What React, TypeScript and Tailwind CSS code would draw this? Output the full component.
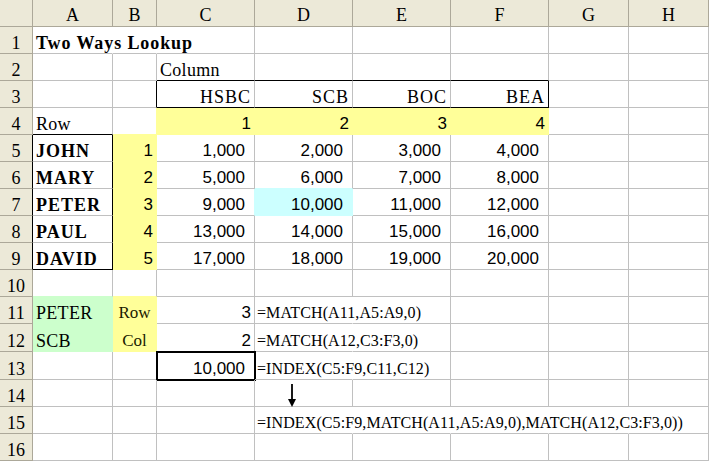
type Fill = 'w' | 'y' | 'g' | 'c'
type Edge = Fill | 'grid' | 'k'

type Cell = {
  v?: string
  f?: 'title' | 'label' | 'bank' | 'small' | 'name' | 'num' | 'fx'
  al?: 'l' | 'r' | 'c'
  pad?: 'fmt'
  fill?: Fill
  r?: 'k'
  b?: 'k'
  hideR?: boolean
  thick?: boolean
  arrow?: boolean
}

const COLS = ['A', 'B', 'C', 'D', 'E', 'F', 'G', 'H']

// white cells get no background so text spilling over from the left stays visible
const bgCls: Record<Fill, string> = {
  w: '',
  y: 'bg-[#ffff99]',
  g: 'bg-[#ccffcc]',
  c: 'bg-[#ccffff]',
}

const rCls: Record<Edge, string> = {
  grid: 'border-r-[#c0c0c0]',
  k: 'border-r-black',
  w: 'border-r-transparent',
  y: 'border-r-[#ffff99]',
  g: 'border-r-[#ccffcc]',
  c: 'border-r-[#ccffff]',
}

const bCls: Record<Edge, string> = {
  grid: 'border-b-[#c0c0c0]',
  k: 'border-b-black',
  w: 'border-b-transparent',
  y: 'border-b-[#ffff99]',
  g: 'border-b-[#ccffcc]',
  c: 'border-b-[#ccffff]',
}

const fontCls = {
  title: "font-['Liberation_Serif',serif] text-[18px] font-bold tracking-[0.9px] text-black",
  label: "font-['Liberation_Serif',serif] text-[18px] tracking-[0.3px] text-black",
  bank: "font-['Liberation_Serif',serif] text-[18px] tracking-[1px] text-black",
  small: "font-['Liberation_Serif',serif] text-[17px] text-[#1a1a00]",
  name: "font-['Liberation_Serif',serif] text-[18px] font-bold tracking-[1px] text-black",
  num: "font-['Liberation_Sans',sans-serif] text-[17px] text-black",
  fx: "font-['Liberation_Serif',serif] text-[16px] tracking-[0.1px] text-black",
}

const num = (v: string): Cell => ({ v, f: 'num', al: 'r', pad: 'fmt' })
const idx = (v: string): Cell => ({ v, f: 'num', al: 'r', fill: 'y' })
const name = (v: string, last = false): Cell => ({ v, f: 'name', r: 'k', b: last ? 'k' : undefined })

// 16 rows x 8 columns (A..H)
const sheet: Cell[][] = [
  [{ v: 'Two Ways Lookup', f: 'title', hideR: true }, { hideR: true }, {}, {}, {}, {}, {}, {}],
  [{}, {}, { v: 'Column', f: 'label', b: 'k' }, { b: 'k' }, { b: 'k' }, { b: 'k' }, {}, {}],
  [
    {},
    { r: 'k' },
    { v: 'HSBC', f: 'bank', al: 'r', b: 'k' },
    { v: 'SCB', f: 'bank', al: 'r', b: 'k' },
    { v: 'BOC', f: 'bank', al: 'r', b: 'k' },
    { v: 'BEA', f: 'bank', al: 'r', b: 'k', r: 'k' },
    {},
    {},
  ],
  [{ v: 'Row', f: 'label', b: 'k' }, {}, idx('1'), idx('2'), idx('3'), idx('4'), {}, {}],
  [name('JOHN'), idx('1'), num('1,000'), num('2,000'), num('3,000'), num('4,000'), {}, {}],
  [name('MARY'), idx('2'), num('5,000'), num('6,000'), num('7,000'), num('8,000'), {}, {}],
  [name('PETER'), idx('3'), num('9,000'), { ...num('10,000'), fill: 'c' }, num('11,000'), num('12,000'), {}, {}],
  [name('PAUL'), idx('4'), num('13,000'), num('14,000'), num('15,000'), num('16,000'), {}, {}],
  [name('DAVID', true), idx('5'), num('17,000'), num('18,000'), num('19,000'), num('20,000'), {}, {}],
  [{}, {}, {}, {}, {}, {}, {}, {}],
  [
    { v: 'PETER', f: 'label', fill: 'g' },
    { v: 'Row', f: 'small', al: 'c', fill: 'y' },
    { v: '3', f: 'num', al: 'r' },
    { v: '=MATCH(A11,A5:A9,0)', f: 'fx', hideR: true },
    {}, {}, {}, {},
  ],
  [
    { v: 'SCB', f: 'label', fill: 'g' },
    { v: 'Col', f: 'small', al: 'c', fill: 'y' },
    { v: '2', f: 'num', al: 'r' },
    { v: '=MATCH(A12,C3:F3,0)', f: 'fx', hideR: true },
    {}, {}, {}, {},
  ],
  [
    {}, {},
    { ...num('10,000'), thick: true },
    { v: '=INDEX(C5:F9,C11,C12)', f: 'fx', hideR: true },
    {}, {}, {}, {},
  ],
  [{}, {}, {}, { arrow: true }, {}, {}, {}, {}],
  [
    {}, {}, {},
    { v: '=INDEX(C5:F9,MATCH(A11,A5:A9,0),MATCH(A12,C3:F3,0))', f: 'fx', hideR: true },
    { hideR: true }, { hideR: true }, { hideR: true }, {},
  ],
  [{}, {}, {}, {}, {}, {}, {}, {}],
]

function rightEdge(row: Cell[], j: number): Edge {
  const c = row[j]
  const own = c.fill ?? 'w'
  if (c.r) return 'k'
  if (c.hideR) return own
  if (own !== 'w') return own
  const next = row[j + 1]?.fill
  if (next && next !== 'w') return next
  return 'grid'
}

function bottomEdge(i: number, j: number): Edge {
  const c = sheet[i][j]
  const own = c.fill ?? 'w'
  if (c.b) return 'k'
  if (own !== 'w') return own
  const below = sheet[i + 1]?.[j]?.fill
  if (below && below !== 'w') return below
  return 'grid'
}

function Arrow() {
  return (
    <svg className="absolute left-[32px] top-[4px]" width="10" height="24" viewBox="0 0 10 24">
      <line x1="5" y1="0" x2="5" y2="16" stroke="#000" strokeWidth="1.8" />
      <polygon points="1,15 9,15 5,23" fill="#000" />
    </svg>
  )
}

export default function App() {
  return (
    <div className="w-[709px] h-[461px] overflow-hidden bg-white">
      <div className="grid grid-cols-[33px_80px_44px_98px_98px_98px_98px_80px_80px] grid-rows-[27px_repeat(11,27px)_28px_28px_repeat(3,27px)]">
        {/* column headers */}
        <div className="bg-[#ece9d8] border-r border-b border-r-[#aca899] border-b-[#aca899]" />
        {COLS.map(c => (
          <div
            key={c}
            className="flex items-end justify-center bg-[#ece9d8] border-r border-b border-r-[#aca899] border-b-[#aca899] font-['Liberation_Serif',serif] text-[18px] leading-[20px] text-black"
          >
            <span className="pb-px">{c}</span>
          </div>
        ))}

        {sheet.map((row, i) => (
          <div key={i} className="contents">
            <div
              className={`flex items-end justify-center bg-[#ece9d8] border-r border-b border-b-[#aca899] font-['Liberation_Serif',serif] text-[18px] leading-[20px] text-black ${
                i >= 4 && i <= 8 ? 'border-r-black' : 'border-r-[#aca899]'
              }`}
            >
              {i + 1}
            </div>
            {row.map((cell, j) => {
              const align =
                cell.al === 'r' ? 'justify-end' : cell.al === 'c' ? 'justify-center' : 'justify-start'
              const padding =
                cell.al === 'r'
                  ? cell.pad === 'fmt'
                    ? 'pr-[9px]'
                    : 'pr-[3px]'
                  : cell.al === 'c'
                    ? ''
                    : cell.f === 'fx'
                      ? 'pl-[2px]'
                      : 'pl-[3px]'
              return (
                <div
                  key={j}
                  className={`flex items-end whitespace-nowrap border-r border-b leading-[20px] ${align} ${padding} ${
                    bgCls[cell.fill ?? 'w']
                  } ${rCls[rightEdge(row, j)]} ${bCls[bottomEdge(i, j)]} ${
                    cell.thick ? 'outline-2 outline-black -outline-offset-1' : ''
                  } ${cell.arrow ? 'relative' : ''} ${cell.f ? fontCls[cell.f] : ''}`}
                >
                  {cell.v}
                  {cell.arrow && <Arrow />}
                </div>
              )
            })}
          </div>
        ))}
      </div>
    </div>
  )
}
